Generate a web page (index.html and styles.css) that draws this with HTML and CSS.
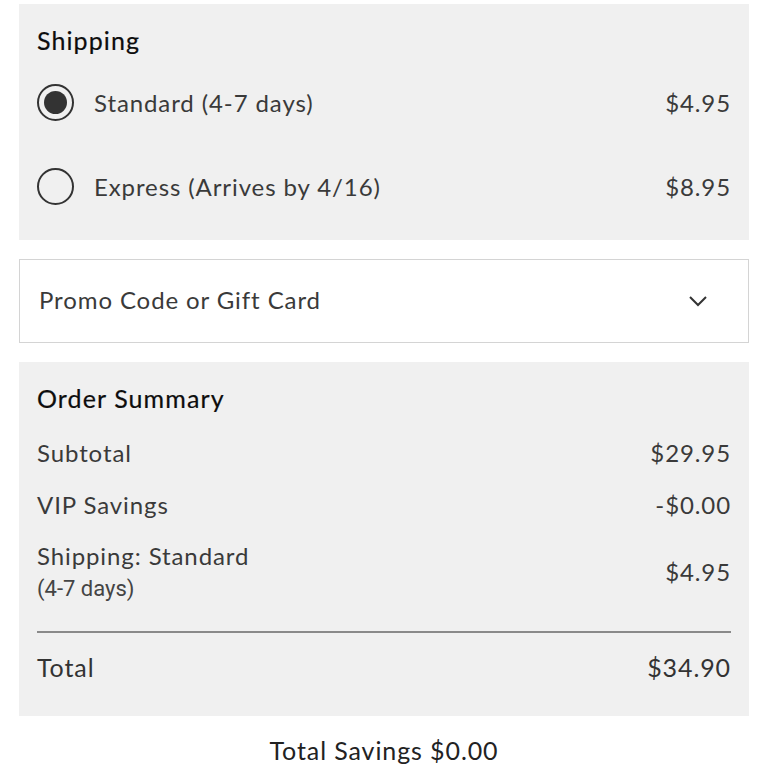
FILE: index.html
```html
<!DOCTYPE html>
<html>
<head>
<meta charset="utf-8">
<link rel="stylesheet" href="styles.css">
</head>
<body>
<div class="page">
  <section class="card shipping">
    <h2 class="heading">Shipping</h2>
    <div class="option">
      <span class="radio checked"></span>
      <span class="opt-label">Standard (4-7 days)</span>
      <span class="price">$4.95</span>
    </div>
    <div class="option">
      <span class="radio"></span>
      <span class="opt-label">Express (Arrives by 4/16)</span>
      <span class="price">$8.95</span>
    </div>
  </section>

  <div class="promo">
    <span class="promo-label">Promo Code or Gift Card</span>
    <svg class="chevron" width="20" height="12" viewBox="0 0 20 12"><path d="M2 2 L10 10 L18 2" fill="none" stroke="#333" stroke-width="2"/></svg>
  </div>

  <section class="card summary">
    <h2 class="heading">Order Summary</h2>
    <div class="row"><span>Subtotal</span><span>$29.95</span></div>
    <div class="row"><span>VIP Savings</span><span>-$0.00</span></div>
    <div class="row ship-row">
      <div class="ship-label">
        <span>Shipping: Standard</span>
        <span class="sub">(4-7 days)</span>
      </div>
      <span>$4.95</span>
    </div>
    <div class="divider"></div>
    <div class="row total"><span>Total</span><span>$34.90</span></div>
  </section>

  <div class="savings">Total Savings $0.00</div>
</div>
</body>
</html>
```

FILE: styles.css
```css
* { box-sizing: border-box; }
body {
  margin: 0;
  background: #fff;
  font-family: Lato, "Open Sans", sans-serif;
  font-size: 24px;
  letter-spacing: 0.9px;
  color: #3a3a3a;
}
.page {
  padding: 4px 19px 0;
  display: flex;
  flex-direction: column;
  gap: 19px;
}
.card {
  background: #f0f0f0;
  padding: 0 18px;
}
.heading {
  margin: 0;
  font-size: 25px;
  letter-spacing: 1.1px;
  font-weight: 400;
  color: #0d0d0d;
  line-height: 28px;
  -webkit-text-stroke: 0.2px #0d0d0d;
}
.shipping { padding-top: 22px; padding-bottom: 12px; }
.shipping .heading { margin-bottom: 6px; }
.option {
  height: 84px;
  display: flex;
  align-items: center;
}
.radio {
  width: 37px;
  height: 37px;
  border: 2px solid #333;
  border-radius: 50%;
  display: flex;
  align-items: center;
  justify-content: center;
  margin-right: 20px;
  flex: none;
}
.radio.checked::after {
  content: "";
  width: 23px;
  height: 23px;
  border-radius: 50%;
  background: #333;
}
.opt-label { flex: 1; }

.promo {
  height: 84px;
  border: 1.5px solid #d4d4d4;
  display: flex;
  align-items: center;
  justify-content: space-between;
  padding: 0 40px 3px 19px;
}
.chevron { display: block; margin-top: 3px; }

.summary { padding-top: 22px; height: 354px; }
.summary .heading { margin-bottom: 14px; }
.row {
  display: flex;
  justify-content: space-between;
  align-items: center;
  height: 52px;
}
.ship-row { height: 82px; }
.ship-label {
  display: flex;
  flex-direction: column;
  align-self: flex-start;
  padding-top: 11px;
}
.ship-label > span:first-child { line-height: 30px; }
.ship-label .sub {
  font-family: Roboto, sans-serif;
  letter-spacing: 0;
  font-size: 22px;
  line-height: 36px;
  color: #444;
}
.divider {
  height: 2px;
  background: #8a8a8a;
  margin-top: 19px;
}
.total { height: 68px; font-size: 25px; color: #333; }
.savings {
  text-align: center;
  font-size: 25px;
  line-height: 30px;
  color: #222;
}
```
